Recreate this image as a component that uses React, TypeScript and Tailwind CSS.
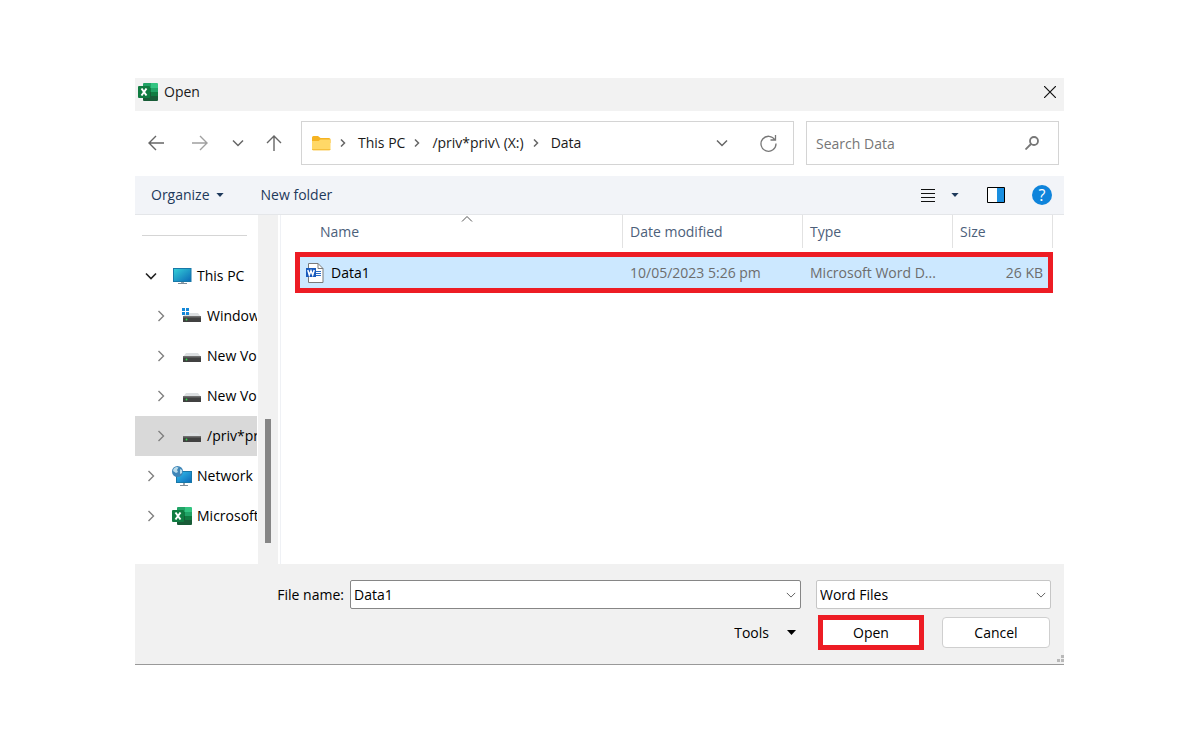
import { useState } from "react";
import type { ReactNode } from "react";

interface TreeItem {
  label: string;
  icon: ReactNode;
  nested?: boolean;
  expanded?: boolean;
  selected?: boolean;
}

const ExcelIcon = () => (
  <svg width="20" height="18" viewBox="0 0 20 18" className="shrink-0">
    <path d="M5 1a1 1 0 0 1 1-1h7v5H5z" fill="#21a366" />
    <path d="M13 0h6a1 1 0 0 1 1 1v4h-7z" fill="#33c481" />
    <path d="M5 5h8v4H5z" fill="#107c41" />
    <path d="M13 5h7v4h-7z" fill="#21a366" />
    <path d="M5 9h8v9H6a1 1 0 0 1-1-1z" fill="#185c37" />
    <path d="M13 9h7v4h-7z" fill="#107c41" />
    <path d="M13 13h7v4a1 1 0 0 1-1 1h-6z" fill="#185c37" />
    <rect y="3" width="12" height="12" rx="1" fill="#107c41" />
    <path d="M3.500 5.500l5 7M8.500 5.500l-5 7" stroke="#fff" strokeWidth="2" />
  </svg>
);

const FolderIcon = () => (
  <svg width="19" height="15" viewBox="0 0 19 15" className="shrink-0">
    <path d="M0 1.500A1.500 1.500 0 0 1 1.500 0h4.500l2.500 2H17a1.500 1.500 0 0 1 1.500 1.500V7H0z" fill="#f5b322" />
    <path d="M0 5h6.500l2-1.500h10V13a1.200 1.200 0 0 1-1.200 1.200H1.200A1.200 1.200 0 0 1 0 13z" fill="#ffd867" />
    <path d="M0 13h18.500a1.200 1.200 0 0 1-1.200 1.200H1.200A1.200 1.200 0 0 1 0 13z" fill="#f6bf3c" />
  </svg>
);

const MonitorIcon = () => (
  <svg width="19" height="17" viewBox="0 0 19 17" className="shrink-0">
    <defs>
      <linearGradient id="screen" x1="0" y1="0" x2="1" y2="1">
        <stop offset="0" stopColor="#35d1d8" />
        <stop offset="1" stopColor="#0b69b7" />
      </linearGradient>
    </defs>
    <rect x=".5" y=".5" width="17.500" height="13" fill="url(#screen)" stroke="#1878a8" />
    <path d="M8 14h3v2H8z" fill="#9aa5ae" />
    <path d="M5 15.500h9" stroke="#7d8d99" />
  </svg>
);

const DriveIcon = ({ windows = false }: { windows?: boolean }) => (
  <svg width="20" height="20" viewBox="0 0 20 20" className="shrink-0">
    <path d="M4 7h12l3 4H1z" fill="#dcdfe1" />
    <rect x="1" y="10" width="18" height="6" fill="#414141" />
    <path d="M1 10h18v1.500H1z" fill="#707070" />
    <circle cx="4.500" cy="13.500" r=".9" fill="#2fe04a" />
    {windows && (
      <path d="M0 2h3v3H0zM4 2h3v3H4zM0 6h3v3H0zM4 6h3v3H4z" fill="#1488d8" />
    )}
  </svg>
);

const NetworkIcon = () => (
  <svg width="20" height="20" viewBox="0 0 20 20" className="shrink-0">
    <defs>
      <linearGradient id="net" x1="0" y1="0" x2="1" y2="1">
        <stop offset="0" stopColor="#33c3ee" />
        <stop offset="1" stopColor="#0b68b8" />
      </linearGradient>
    </defs>
    <rect x="4.500" y="5.500" width="15" height="11" fill="url(#net)" stroke="#1878a8" />
    <path d="M11 17h2v2h-2z" fill="#9aa5ae" />
    <path d="M8 19.500h8" stroke="#7d8d99" />
    <circle cx="5.500" cy="5.500" r="5.500" fill="#3f86b8" />
    <path d="M1.500 3c2-2.500 4-2 5-1.500L5 4l1 2-2 1-3-2zM8 3l2 1v3L8 8z" fill="#b9dbea" />
  </svg>
);

const WordFileIcon = () => (
  <svg width="18" height="20" viewBox="0 0 18 20" className="shrink-0">
    <path d="M2.500.500h9.500l5 5v14H2.500z" fill="#fff" stroke="#7a7a7a" />
    <path d="M12 .500v5h5" fill="none" stroke="#7a7a7a" />
    <path d="M10 8.500h5M10 10.500h5M10 12.500h5" stroke="#2b6cc4" />
    <rect y="5" width="10" height="9" fill="#185abd" />
    <path d="M1.800 7l1.500 5L5 7.700 6.700 12l1.500-5" fill="none" stroke="#fff" strokeWidth="1.500" />
  </svg>
);

const Chevron = ({ className }: { className?: string }) => (
  <svg
    width="12"
    height="12"
    viewBox="0 0 12 12"
    fill="none"
    stroke="currentColor"
    className={className}
  >
    <path d="M1 3.500l5 5 5-5" />
  </svg>
);

const Caret = ({ className }: { className?: string }) => (
  <svg width="9" height="5" viewBox="0 0 9 5" className={className}>
    <path d="M0 0h9L4.500 5z" fill="currentColor" />
  </svg>
);

const treeItems: TreeItem[] = [
  { label: "This PC", icon: <MonitorIcon />, expanded: true },
  { label: "Windows", icon: <DriveIcon windows />, nested: true },
  { label: "New Vol", icon: <DriveIcon />, nested: true },
  { label: "New Vol", icon: <DriveIcon />, nested: true },
  { label: "/priv*priv", icon: <DriveIcon />, nested: true, selected: true },
  { label: "Network", icon: <NetworkIcon /> },
  { label: "Microsoft", icon: <ExcelIcon /> },
];

const breadcrumbs = ["This PC", "/priv*priv\\ (X:)", "Data"];

const TitleBar = () => (
  <header className="flex h-[33px] items-center justify-between bg-[#f2f2f2] pr-2 pl-[3px]">
    <div className="flex items-center gap-1.5 pb-[5px]">
      <ExcelIcon />
      <h1>Open</h1>
    </div>
    <button type="button" aria-label="Close" className="pb-[5px]">
      <svg width="12" height="12" viewBox="0 0 12 12" stroke="#111" strokeWidth="1.200">
        <path d="M0 0l12 12M12 0L0 12" />
      </svg>
    </button>
  </header>
);

const NavBar = () => {
  const [search, setSearch] = useState("");

  return (
    <nav className="flex h-[65px] items-center pr-[5px] pb-px pl-[13px]">
      <div className="flex w-[153px] shrink-0 items-center text-[#666]">
        <button type="button" aria-label="Back">
          <svg width="16" height="16" viewBox="0 0 16 16" fill="none" stroke="currentColor" strokeWidth="1.400">
            <path d="M16 8H1M8 1L1 8l7 7" />
          </svg>
        </button>
        <button type="button" aria-label="Forward" className="ml-7 text-[#a0a0a0]">
          <svg width="16" height="16" viewBox="0 0 16 16" fill="none" stroke="currentColor" strokeWidth="1.400">
            <path d="M0 8h15M8 1l7 7-7 7" />
          </svg>
        </button>
        <button type="button" aria-label="Recent locations" className="ml-6">
          <Chevron className="stroke-[1.5]" />
        </button>
        <button type="button" aria-label="Up" className="ml-[22px]">
          <svg width="16" height="16" viewBox="0 0 16 16" fill="none" stroke="currentColor" strokeWidth="1.400">
            <path d="M8 16V1M1 8l7-7 7 7" />
          </svg>
        </button>
      </div>

      {/* Address bar */}
      <div className="flex h-11 min-w-0 flex-1 items-center border border-[#d4d4d4] pr-4 pl-2.5">
        <FolderIcon />
        <ol className="flex flex-1 items-center pb-px">
          {breadcrumbs.map((crumb) => (
            <li key={crumb} className="flex items-center whitespace-nowrap">
              <svg
                width="6"
                height="8"
                viewBox="0 0 6 8"
                fill="none"
                stroke="#666"
                strokeWidth="1.500"
                className="mr-3 ml-[9px]"
              >
                <path d="M1 .5L4.500 4 1 7.500" />
              </svg>
              <a href="#">{crumb}</a>
            </li>
          ))}
        </ol>
        <button type="button" aria-label="Previous locations" className="text-[#666]">
          <Chevron className="stroke-[1.5]" />
        </button>
        <button type="button" aria-label="Refresh" className="ml-8">
          <svg width="17" height="17" viewBox="0 0 17 17" fill="none" stroke="#777" strokeWidth="1.300">
            <path d="M15 5A7.500 7.500 0 1 0 16 8.500M15.500 0v5h-5" />
          </svg>
        </button>
      </div>

      <div className="relative ml-3 h-11 w-[253px] shrink-0">
        <input
          type="text"
          aria-label="Search Data"
          placeholder="Search Data"
          value={search}
          onChange={(e) => setSearch(e.target.value)}
          className="h-full w-full border border-[#d4d4d4] pr-10 pl-[9px] outline-none placeholder:text-[#767676]"
        />
        <svg
          width="14"
          height="14"
          viewBox="0 0 14 14"
          fill="none"
          stroke="#777"
          strokeWidth="1.800"
          className="absolute top-[15px] right-5"
        >
          <circle cx="9" cy="5" r="4" />
          <path d="M6 8L.5 13.500" />
        </svg>
      </div>
    </nav>
  );
};

const Toolbar = () => (
  <div className="flex h-[39px] items-center border-b border-[#e4e6e9] bg-[#f2f4f8] pr-3 pl-4 text-[#1e395b]">
    <button type="button" className="flex items-center gap-1.5">
      Organize
      <Caret className="h-1 w-2" />
    </button>
    <button type="button" className="ml-[37px]">
      New folder
    </button>
    <div className="ml-auto flex items-center">
      <button type="button" aria-label="Change view">
        <svg width="14" height="13" viewBox="0 0 14 13" stroke="#111">
          <path d="M0 .500h14M0 4.500h14M0 8.500h14M0 12.500h14" />
        </svg>
      </button>
      <button type="button" aria-label="More view options" className="ml-4">
        <Caret className="h-1 w-2" />
      </button>
      <button type="button" aria-label="Show preview pane" className="ml-7">
        <svg width="18" height="16" viewBox="0 0 18 16">
          <path d="M1 1h16v14H1z" fill="#fff" />
          <path d="M10 1h7v14h-7z" fill="#1a8fe0" />
          <path d="M.500.500h17v15H.500z" fill="none" stroke="#000" />
        </svg>
      </button>
      <button
        type="button"
        aria-label="Help"
        className="ml-[27px] flex h-5 w-5 items-center justify-center rounded-full bg-[#0f84db] text-base text-white"
      >
        ?
      </button>
    </div>
  </div>
);

const Sidebar = () => (
  <aside className="flex w-[146px] shrink-0 border-r border-[#eff1f5]">
    <div className="w-[122px] shrink-0 overflow-hidden">
      <div className="mr-2.5 ml-[7px] h-[21px] border-b border-[#d5d5d5]" />
      <ul className="mt-5">
        {treeItems.map((item, index) => (
          <li
            key={index}
            className={`flex h-10 items-center gap-[5px] whitespace-nowrap text-black ${
              item.nested ? "pl-5" : "pl-2.5"
            } ${item.selected ? "bg-[#d9d9d9]" : ""}`}
          >
            <button
              type="button"
              aria-label={`Toggle ${item.label}`}
              className={item.expanded ? "text-[#222]" : "text-[#808080]"}
            >
              <Chevron
                className={
                  item.expanded ? "stroke-[1.6]" : "-rotate-90 stroke-[1.4]"
                }
              />
            </button>
            <span className="ml-2.5 flex w-5 shrink-0 justify-center">{item.icon}</span>
            {item.label}
          </li>
        ))}
      </ul>
    </div>
    {/* Scrollbar */}
    <div className="ml-px flex w-5 flex-col items-center justify-end bg-[#f1f1f1] pb-[21px]">
      <div className="h-[124px] w-1.5 bg-[#868686]" />
    </div>
  </aside>
);

const FileList = () => (
  <main className="min-w-0 flex-1 pr-[11px] pl-3.5">
    <table className="w-full table-fixed text-left">
      <thead className="text-[#4c607a]">
        <tr>
          <th className="p-0 pb-1 font-normal">
            <div className="relative ml-4 flex h-[33px] items-center border-r border-[#e2e2e2] pl-[9px]">
              Name
              <Chevron className="absolute -top-0.5 left-1/2 -translate-x-1/2 rotate-180 text-[#555]" />
            </div>
          </th>
          <th className="w-[180px] p-0 pb-1 font-normal">
            <div className="flex h-[33px] items-center border-r border-[#e2e2e2] pl-[7px]">
              Date modified
            </div>
          </th>
          <th className="w-[150px] p-0 pb-1 font-normal">
            <div className="flex h-[33px] items-center border-r border-[#e2e2e2] pl-[7px]">
              Type
            </div>
          </th>
          <th className="w-[100px] p-0 pb-1 font-normal">
            <div className="flex h-[33px] items-center border-r border-[#e2e2e2] pl-[7px]">
              Size
            </div>
          </th>
        </tr>
      </thead>
      <tbody>
        <tr className="h-[41px] bg-[#cce8ff] text-[#6d6d6d] outline-5 -outline-offset-5 outline-[#ed1c24]">
          <td className="p-0 pl-[11px]">
            <div className="flex items-center gap-[7px] text-black">
              <WordFileIcon />
              Data1
            </div>
          </td>
          <td className="p-0 pl-[7px]">10/05/2023 5:26 pm</td>
          <td className="p-0 pl-[7px]">Microsoft Word D...</td>
          <td className="p-0 pr-2.5 text-right">26 KB</td>
        </tr>
      </tbody>
    </table>
  </main>
);

const Footer = () => {
  const [fileName, setFileName] = useState("Data1");

  return (
    <footer className="relative border-b border-[#999] bg-[#f1f1f1] pt-4 pr-[13px] pb-3.5 text-black">
      <div className="flex items-center">
        <label htmlFor="fileName" className="w-[215px] shrink-0 pr-1.5 text-right">
          File name:
        </label>
        <div className="relative min-w-0 flex-1">
          <input
            type="text"
            id="fileName"
            value={fileName}
            onChange={(e) => setFileName(e.target.value)}
            className="h-[29px] w-full rounded-xs border border-[#868686] bg-white px-[3px] outline-none"
          />
          <button
            type="button"
            aria-label="Recent files"
            className="absolute top-2.5 right-[5px] text-[#444]"
          >
            <Chevron className="h-2.5 w-2.5" />
          </button>
        </div>
        <div className="relative ml-[15px] w-[235px] shrink-0">
          <select
            aria-label="File type"
            className="h-[29px] w-full appearance-none rounded-xs border border-[#c6c6c6] bg-white px-[3px] outline-none"
          >
            <option>Word Files</option>
          </select>
          <Chevron className="pointer-events-none absolute top-2.5 right-[5px] h-2.5 w-2.5 text-[#444]" />
        </div>
      </div>
      <div className="mt-1.5 flex items-center justify-end pr-px">
        <button type="button" className="flex items-center gap-[18px]">
          Tools
          <Caret />
        </button>
        <button
          type="button"
          className="ml-[22px] h-[35px] w-[106px] border-5 border-[#ed1c24] bg-white"
        >
          Open
        </button>
        <button
          type="button"
          className="ml-[18px] h-[31px] w-[108px] rounded-sm border border-[#cfcfcf] bg-white"
        >
          Cancel
        </button>
      </div>
      <svg
        width="7"
        height="7"
        viewBox="0 0 7 7"
        className="absolute right-0 bottom-0.5"
        fill="#b9b9b9"
      >
        <path d="M4 0h3v3H4zM0 4h3v3H0zM4 4h3v3H4z" />
      </svg>
    </footer>
  );
};

const App = () => {
  return (
    <div className="min-h-screen bg-white pt-[78px] pr-[136px] pl-[135px] font-['Open_Sans',sans-serif] text-sm text-[#1a1a1a]">
      <div>
        <TitleBar />
        <NavBar />
        <Toolbar />
        <div className="flex min-h-[349px]">
          <Sidebar />
          <FileList />
        </div>
        <Footer />
      </div>
    </div>
  );
};

export default App;
